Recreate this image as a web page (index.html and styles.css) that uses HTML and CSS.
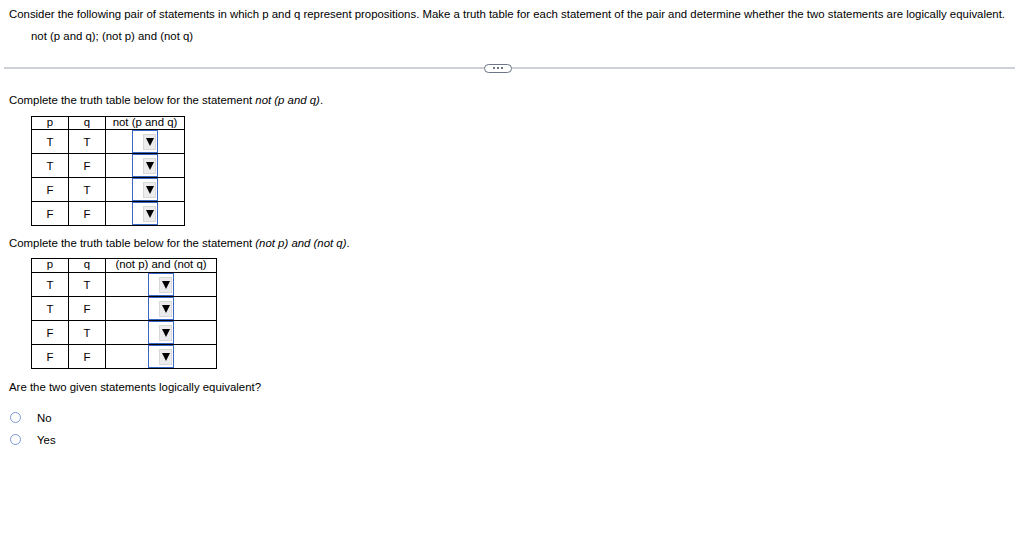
FILE: index.html
```html
<!DOCTYPE html>
<html>
<head>
	<title>Truth tables</title>
	<link rel="stylesheet" href="styles.css">
</head>
<body>
<div class="question">
	<p class="intro">Consider the following pair of statements in which p and q represent propositions. Make a truth table for each statement of the pair and determine whether the two statements are logically equivalent.</p>
	<p class="pair">not (p and q); (not p) and (not q)</p>
</div>

<div class="divider">
	<span class="more"><i></i><i></i><i></i></span>
</div>

<div class="answer">
	<p class="prompt">Complete the truth table below for the statement <em>not (p and q)</em>.</p>
	<table class="truth t1">
		<tr><th>p</th><th>q</th><th>not (p and q)</th></tr>
		<tr><td>T</td><td>T</td><td><span class="pick"><b></b></span></td></tr>
		<tr><td>T</td><td>F</td><td><span class="pick"><b></b></span></td></tr>
		<tr><td>F</td><td>T</td><td><span class="pick"><b></b></span></td></tr>
		<tr><td>F</td><td>F</td><td><span class="pick"><b></b></span></td></tr>
	</table>

	<p class="prompt second">Complete the truth table below for the statement <em>(not p) and (not q)</em>.</p>
	<table class="truth t2">
		<tr><th>p</th><th>q</th><th>(not p) and (not q)</th></tr>
		<tr><td>T</td><td>T</td><td><span class="pick"><b></b></span></td></tr>
		<tr><td>T</td><td>F</td><td><span class="pick"><b></b></span></td></tr>
		<tr><td>F</td><td>T</td><td><span class="pick"><b></b></span></td></tr>
		<tr><td>F</td><td>F</td><td><span class="pick"><b></b></span></td></tr>
	</table>

	<p class="prompt third">Are the two given statements logically equivalent?</p>
	<ul class="choices">
		<li><span class="radio"></span>No</li>
		<li><span class="radio"></span>Yes</li>
	</ul>
</div>
</body>
</html>
```

FILE: styles.css
```css
* {
	padding: 0px;
	margin: 0px;
}
li {
	list-style: none;
}
body {
	font-family: "Liberation Sans", Arial, sans-serif;
	font-size: 11.4px;
	color: #000;
	background: #fff;
}

.question {
	padding: 8px 0 0 9px;
}
.question .intro {
	line-height: 13px;
}
.question .pair {
	margin-top: 9px;
	padding-left: 22px;
	line-height: 13px;
}

.divider {
	margin: 24px 9px 0 4px;
	height: 2px;
	background: #cdd0d6;
	display: flex;
	justify-content: center;
	align-items: center;
}
.divider .more {
	width: 26px;
	height: 7px;
	border: 1px solid #6b7686;
	border-radius: 5px;
	background: #fff;
	display: flex;
	justify-content: center;
	align-items: center;
	gap: 2px;
	margin-left: -24px;
}
.divider .more i {
	width: 2px;
	height: 2px;
	background: #6b7686;
}

.answer {
	padding: 25px 0 0 9px;
}
.prompt {
	line-height: 13px;
}
.prompt.second {
	margin-top: 11px;
}
.prompt.third {
	margin-top: 12px;
}

.truth {
	border-collapse: collapse;
	margin: 9px 0 0 22px;
}
.truth.t2 {
	margin-top: 8px;
}
.truth th,
.truth td {
	border: 1px solid #000;
	text-align: center;
	font-weight: normal;
	padding: 0;
}
.truth th {
	height: 12px;
	line-height: 11px;
	vertical-align: top;
}
.t2 th {
	height: 13px;
}
.truth td {
	height: 23px;
}
.truth th:nth-child(1),
.truth th:nth-child(2) {
	width: 36px;
}
.t1 th:nth-child(3) {
	width: 78px;
}
.t2 th:nth-child(3) {
	width: 110px;
}

.pick {
	display: inline-flex;
	justify-content: flex-end;
	align-items: center;
	vertical-align: middle;
	width: 23px;
	height: 21px;
	border: 1px solid #3a66c4;
	padding-right: 1px;
}
.pick b {
	display: flex;
	justify-content: center;
	align-items: center;
	width: 13px;
	height: 16px;
	background: #ececec;
	border: 1px solid #d8d8d8;
	box-sizing: border-box;
}
.pick b:after {
	content: "";
	border-left: 4px solid transparent;
	border-right: 4px solid transparent;
	border-top: 8px solid #000;
}

.choices {
	margin-top: 17px;
}
.choices li {
	display: flex;
	align-items: center;
	height: 13px;
	margin-bottom: 9px;
}
.radio {
	width: 9px;
	height: 9px;
	border: 1px solid #7d98d8;
	border-radius: 50%;
	margin: 0 16px 0 1px;
}
```
